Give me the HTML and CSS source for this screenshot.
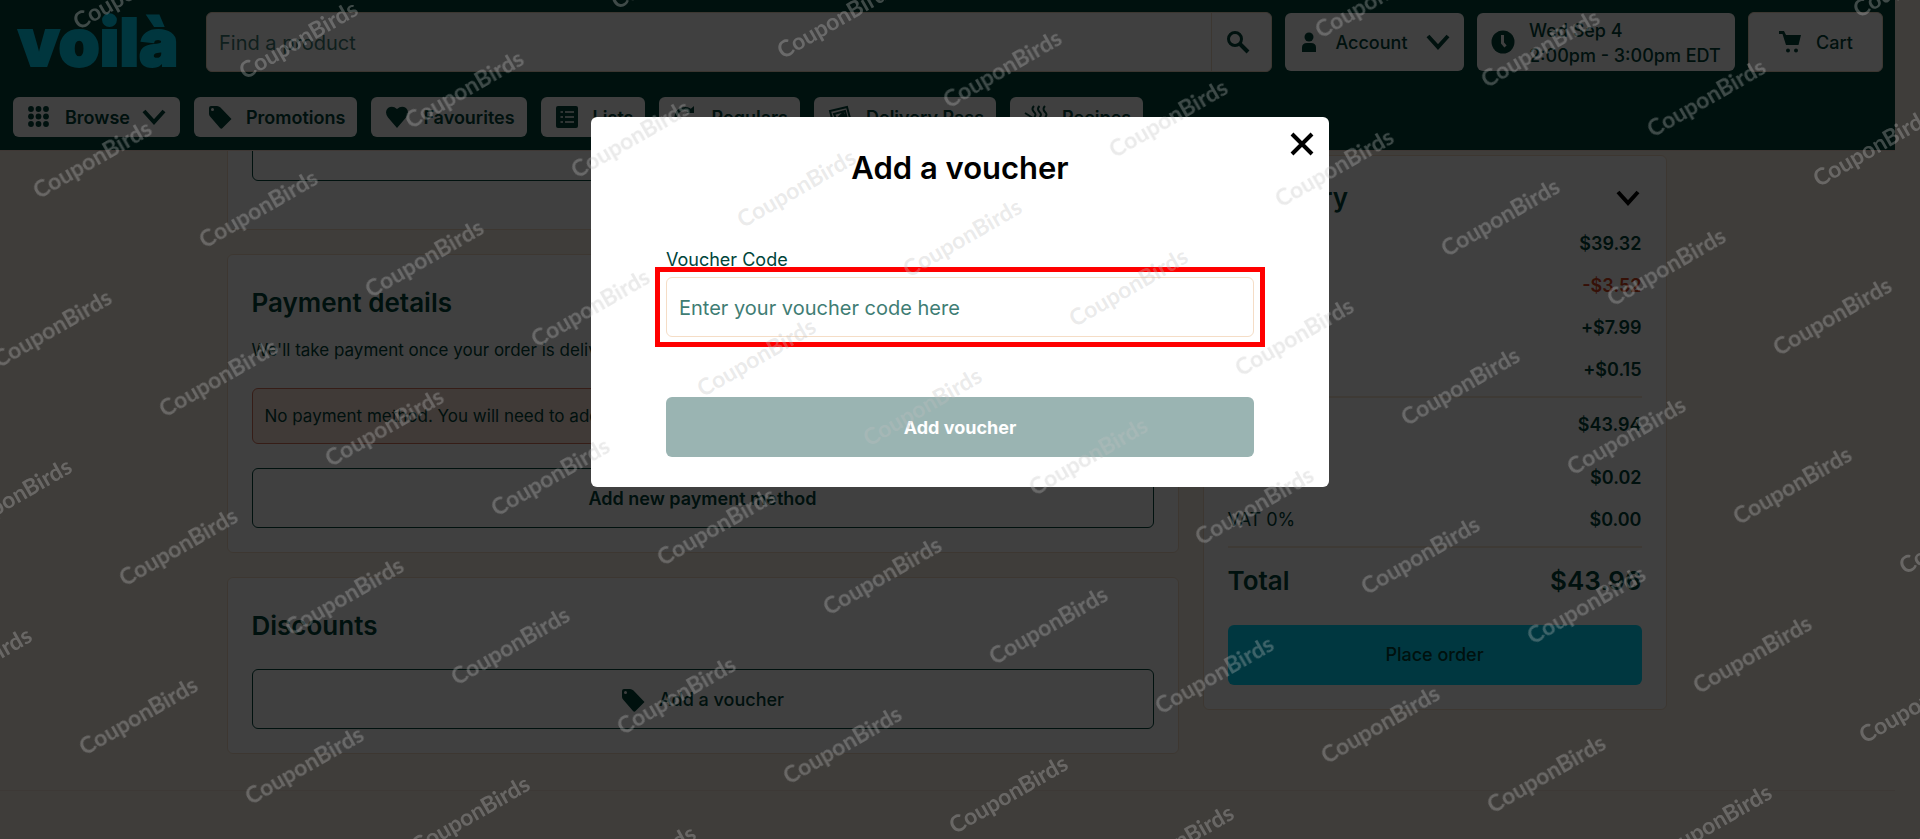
FILE: index.html
```html
<!DOCTYPE html>
<html lang="en">
<head>
<meta charset="utf-8">
<meta name="viewport" content="width=device-width, initial-scale=1">
<title>Checkout - Voilà</title>
<link rel="stylesheet" href="styles.css">
</head>
<body>
<div class="page">
  <header class="header">
    <div class="header-top">
      <a class="logo" href="#">voilà</a>
      <form class="search" role="search">
        <input class="search-input" type="search" placeholder="Find a product" aria-label="Find a product">
        <button class="search-button" type="button" aria-label="Search">
          <svg width="24" height="24" viewBox="0 0 24 24" fill="none" stroke="currentColor"><circle cx="9" cy="9" r="6.5" stroke-width="3"/><path d="M13.5 13.5L22 22" stroke-width="4"/></svg>
        </button>
      </form>
      <button class="chip chip-tall account" type="button">
        <svg width="16" height="20" viewBox="0 0 16 20" fill="currentColor"><circle cx="8" cy="5" r="4.5"/><path d="M1 20v-4.500Q1 11 6 11h4q5 0 5 4.500V20z"/></svg>
        <span>Account</span>
        <svg class="chevron" width="24" height="16" viewBox="0 0 24 16"><path d="M2 2l10 11L22 2"/></svg>
      </button>
      <button class="chip chip-tall slot" type="button">
        <svg width="24" height="24" viewBox="0 0 24 24"><circle cx="12" cy="12" r="11.500" fill="currentColor"/><path d="M11.500 5v8l3 3.500" fill="none" stroke="#fff" stroke-width="3"/></svg>
        <span class="slot-text">Wed Sep 4<br>2:00pm - 3:00pm EDT</span>
      </button>
      <button class="chip cart" type="button">
        <svg width="24" height="24" viewBox="0 0 24 24" fill="currentColor"><path d="M1 1h5l2 4h15l-2.500 10H8L4.500 4H1z"/><circle cx="10" cy="20.500" r="2"/><circle cx="18" cy="20.500" r="2"/></svg>
        <span>Cart</span>
      </button>
    </div>
    <nav class="nav" aria-label="Main">
      <button class="chip nav-chip" type="button">
        <svg class="icon" viewBox="0 0 24 24" fill="currentColor"><circle cx="4" cy="4" r="2.900"/><circle cx="11.500" cy="4" r="2.900"/><circle cx="19" cy="4" r="2.900"/><circle cx="4" cy="11.500" r="2.900"/><circle cx="11.500" cy="11.500" r="2.900"/><circle cx="19" cy="11.500" r="2.900"/><circle cx="4" cy="19" r="2.900"/><circle cx="11.500" cy="19" r="2.900"/><circle cx="19" cy="19" r="2.900"/></svg>
        <span>Browse</span>
        <svg class="chevron" width="24" height="16" viewBox="0 0 24 16"><path d="M2 2l10 11L22 2"/></svg>
      </button>
      <a class="chip nav-chip" href="#"><svg class="icon" viewBox="0 0 24 24"><path d="M3 1h6q2 0 3.500 1.500L23.500 14l-9.500 9.500Q13 24 12 23L2.500 12Q1 10.500 1 9V3q0-2 2-2z" fill="currentColor"/><circle cx="4.500" cy="4.500" r="1.500" fill="#fff"/></svg><span>Promotions</span></a>
      <a class="chip nav-chip" href="#"><svg class="icon" viewBox="0 0 24 24" fill="currentColor"><path d="M12 23L3 12.500Q-1 6.500 3 3q4.500-3 9 1 4.500-4 9-1 4 3.500 0 9.500z"/></svg><span>Favourites</span></a>
      <a class="chip nav-chip" href="#"><svg class="icon" viewBox="0 0 24 24"><rect x="1" y="1" width="22" height="22" rx="2" fill="currentColor"/><path d="M10 7h9M10 12h9M10 17h9M5.500 7h2.500M5.500 12h2.500M5.500 17h2.500" stroke="#fff" stroke-width="1.500"/></svg><span>Lists</span></a>
      <a class="chip nav-chip" href="#"><svg class="icon" viewBox="0 0 24 24" fill="none" stroke="currentColor" stroke-width="3"><path d="M3 12a9 9 0 0 1 16-5M21 12a9 9 0 0 1-16 5"/><path d="M13 8h8V1zM11 16H3v7z" fill="currentColor" stroke="none"/></svg><span>Regulars</span></a>
      <a class="chip nav-chip" href="#"><svg class="icon" viewBox="0 0 24 24" fill="none" stroke="currentColor" stroke-width="2"><path d="M2 6l17-4 4 15-17 4z"/><path d="M6 9l11-3 2 8-10 2z"/><path d="M11 12l4-4 3 5z" fill="currentColor"/></svg><span>Delivery Pass</span></a>
      <a class="chip nav-chip" href="#"><svg class="icon" viewBox="0 0 24 24" fill="none" stroke="currentColor" stroke-width="2"><path d="M10 1q-3 3 0 6t0 5M15.500 1q-3 3 0 6t0 5M21 1q-3 3 0 6t0 5M1 8l8 5M2 14h20q-2 8-10 8T2 14z"/></svg><span>Recipes</span></a>
    </nav>
  </header>

  <main class="checkout">
    <div class="steps">
      <section class="card card-first"><div class="outline-box"></div></section>
      <section class="card">
        <h2 class="card-title">Payment details</h2>
        <p class="card-text">We'll take payment once your order is delivered.</p>
        <p class="alert">No payment method. You will need to add one.</p>
        <button class="outline-box" type="button">Add new payment method</button>
      </section>
      <section class="card card-discounts">
        <h2 class="card-title">Discounts</h2>
        <button class="outline-box" type="button"><svg class="icon" viewBox="0 0 24 24"><path d="M3 1h6q2 0 3.500 1.500L23.500 14l-9.500 9.500Q13 24 12 23L2.500 12Q1 10.500 1 9V3q0-2 2-2z" fill="currentColor"/><circle cx="4.500" cy="4.500" r="1.500" fill="#fff"/></svg>Add a voucher</button>
      </section>
    </div>
    <aside class="card summary">
      <div class="summary-head">
        <h2 class="card-title">Summary</h2>
        <svg class="chevron chevron-dark" width="24" height="16" viewBox="0 0 24 16"><path d="M2 2l10 11L22 2"/></svg>
      </div>
      <div class="rows">
        <div class="row"><b>$39.32</b></div>
        <div class="row saving"><b>-$3.52</b></div>
        <div class="row"><b>+$7.99</b></div>
        <div class="row"><b>+$0.15</b></div>
      </div>
      <div class="rows">
        <div class="row row-sub"><b>$43.94</b></div>
        <div class="row"><b>$0.02</b></div>
        <div class="row"><span>VAT 0%</span><b>$0.00</b></div>
      </div>
      <div class="total"><span>Total</span><span>$43.96</span></div>
      <button class="place-order" type="button">Place order</button>
    </aside>
  </main>
  <footer class="footer"></footer>
</div>

<div class="overlay">
  <div class="modal" role="dialog" aria-modal="true" aria-labelledby="modal-title">
    <button class="close" type="button" aria-label="Close">
      <svg width="24" height="24" viewBox="0 0 24 24" fill="none" stroke="currentColor" stroke-width="4"><path d="M2 2l20 20M22 2L2 22"/></svg>
    </button>
    <h1 class="modal-title" id="modal-title">Add a voucher</h1>
    <label class="field-label" for="voucher">Voucher Code</label>
    <div class="field">
      <input class="field-input" id="voucher" type="text" placeholder="Enter your voucher code here">
    </div>
    <button class="submit" type="button">Add voucher</button>
  </div>
</div>
<svg class="watermarks" id="watermarks" aria-hidden="true"></svg>
<script src="watermarks.js"></script>
</body>
</html>
```
FILE: styles.css
```css
* { box-sizing: border-box; }

body {
  margin: 0;
  background: #f9f1e8;
  color: #00443a;
  font: 400 18px/24px Inter, "Liberation Sans", sans-serif;
}

button, input { font: inherit; color: inherit; }
button { margin: 0; padding: 0; border: 0; cursor: pointer; }
h1, h2, p { margin: 0; }
svg { flex: none; }

.page {
  height: 100vh;
  padding-right: 25px;
  overflow: hidden;
}

.header {
  position: relative;
  z-index: 1;
  padding: 12px 12px 13px 13px;
  background: #004439;
  border-bottom: 1px solid #f9e0d2;
}

.header-top {
  display: flex;
  align-items: center;
  gap: 13px;
  margin-bottom: 25px;
}

.logo {
  width: 180px;
  padding-left: 5px;
  color: #00d5f5;
  font-size: 66px;
  font-weight: 900;
  line-height: 60px;
  text-decoration: none;
  -webkit-text-stroke: 2px #00d5f5;
}

.search {
  display: flex;
  flex: 1;
  height: 60px;
  overflow: hidden;
  background: #fff;
  border: 1px solid #f0d9c4;
  border-radius: 6px;
}

.search-input {
  flex: 1;
  min-width: 0;
  padding: 2px 12px 0;
  background: none;
  border: 0;
  font-size: 20px;
}

.search-input::placeholder { color: #3f7d74; opacity: 1; }

.search-button {
  display: grid;
  place-items: center;
  width: 60px;
  padding-right: 8px;
  background: none;
  border-left: 1px solid #f0d9c4;
}

.chip {
  display: flex;
  align-items: center;
  background: #fff;
  border-radius: 6px;
  color: #00443a;
  font-weight: 500;
  text-decoration: none;
  white-space: nowrap;
}

.chip span { padding-top: 2px; }
.chip-tall { height: 58px; }
.account { width: 179px; padding: 0 14px 0 16px; justify-content: space-between; }
.slot { width: 258px; padding: 0 12px 0 14px; gap: 14px; text-align: left; }
.slot-text { line-height: 25px; }
.cart { width: 135px; height: 60px; justify-content: center; gap: 14px; border: 1px solid #f0d9c4; }

.chevron { fill: none; stroke: currentColor; stroke-width: 4; }
.chevron-dark { color: #000; }
.icon { width: 24px; height: 24px; }

.nav { display: flex; gap: 14px; }
.nav-chip { height: 40px; padding: 0 12px 0 14px; gap: 14px; font-weight: 600; }
.nav-chip .chevron { margin: 0 2px 0 -2px; }

.checkout {
  display: grid;
  grid-template-columns: minmax(0, 1fr) 464px;
  align-items: start;
  gap: 24px;
  max-width: 1442px;
  margin: 0 auto;
  padding: 0 2px 36px 0;
}

.steps { display: grid; gap: 24px; margin-top: -55px; }

.card {
  padding: 24px;
  background: #fff;
  border: 1px solid #f3dcc4;
  border-radius: 6px;
}

.card-first { padding-bottom: 48px; }
.card-title { padding: 8px 0; font-size: 26px; font-weight: 600; line-height: 32px; }
.card-text { margin: 11px 0 26px; font-size: 17px; }

.alert {
  margin-bottom: 24px;
  padding: 15px 12px;
  background: #ffe6da;
  border: 1px solid #d8745c;
  border-radius: 6px;
  font-size: 17px;
}

.outline-box {
  display: flex;
  align-items: center;
  justify-content: center;
  gap: 14px;
  width: 100%;
  height: 60px;
  padding-top: 1px;
  background: #fff;
  border: 1px solid #00443a;
  border-radius: 6px;
  font-weight: 600;
}

.card-discounts .outline-box { margin-top: 19px; font-weight: 500; }

.summary { margin-top: 4px; }
.summary-head { display: flex; align-items: center; justify-content: space-between; margin-bottom: -4px; padding-right: 2px; }
.summary-head .card-title { padding: 2px 0; }

.rows { border-bottom: 2px solid #f6e6d4; }
.summary-head + .rows { padding: 11px 0 5px; }
.row { display: flex; align-items: center; height: 42px; }
.row b { margin-left: auto; font-weight: 600; }
.row-sub { height: 44px; align-items: start; }
.rows + .rows { padding: 15px 0 5px; }
.saving { color: #d8431e; }

.total {
  display: flex;
  justify-content: space-between;
  padding: 17px 0 28px;
  font-size: 26px;
  font-weight: 600;
  line-height: 32px;
}

.place-order {
  width: 100%;
  height: 60px;
  background: #00dcff;
  border-radius: 6px;
  font-weight: 500;
}

.footer { height: 60px; border-top: 1px solid #f2e2d8; }

.overlay {
  position: fixed;
  inset: 0;
  z-index: 2;
  display: flex;
  align-items: flex-start;
  justify-content: center;
  padding: 117px 16px 0;
  background: rgba(0, 0, 0, 0.75);
}

.modal {
  position: relative;
  width: 738px;
  padding: 31px 75px 30px;
  background: #fff;
  border-radius: 6px;
}

.close {
  position: absolute;
  top: 15px;
  right: 15px;
  width: 24px;
  height: 24px;
  background: none;
  color: #000;
  line-height: 0;
}

.modal-title {
  margin-bottom: 59px;
  color: #000;
  font-size: 31px;
  font-weight: 600;
  line-height: 40px;
  text-align: center;
}

.field-label { display: block; line-height: 26px; }

.field {
  margin: -6px -11px 50px;
  padding: 5px 6px;
  border: 5px solid #f00;
}

.field-input {
  display: block;
  width: 100%;
  height: 60px;
  padding: 2px 12px 0;
  background: #fff;
  border: 1px solid #f5ddc6;
  border-radius: 6px;
  font-size: 20px;
}

.field-input::placeholder { color: #3f7d74; opacity: 1; }

.submit {
  width: 100%;
  height: 60px;
  padding-top: 1px;
  background: #9ab4b2;
  border-radius: 6px;
  color: #fff;
  font-weight: 700;
}

.watermarks {
  position: fixed;
  inset: 0;
  z-index: 3;
  width: 100%;
  height: 100%;
  pointer-events: none;
  fill: rgba(191, 191, 191, 0.33);
  font: 700 23px Lato, sans-serif;
}
```
FILE: watermarks.js
```javascript
// Fills the window with a slanted grid of the site name.
const layer = document.getElementById("watermarks");
const ns = "http://www.w3.org/2000/svg";
const across = { x: 166, y: 49.5 };
const down = { x: -40, y: 169 };

for (let j = -5; j <= 8; j++) {
  for (let i = -5; i <= 14; i++) {
    const x = 245 + i * across.x + j * down.x;
    const y = 80 + i * across.y + j * down.y;
    if (x < -130 || x > innerWidth || y < -10 || y > innerHeight + 80) continue;
    const mark = document.createElementNS(ns, "text");
    mark.setAttribute("transform", `translate(${x} ${y}) rotate(-30)`);
    mark.textContent = "CouponBirds";
    layer.append(mark);
  }
}
```
